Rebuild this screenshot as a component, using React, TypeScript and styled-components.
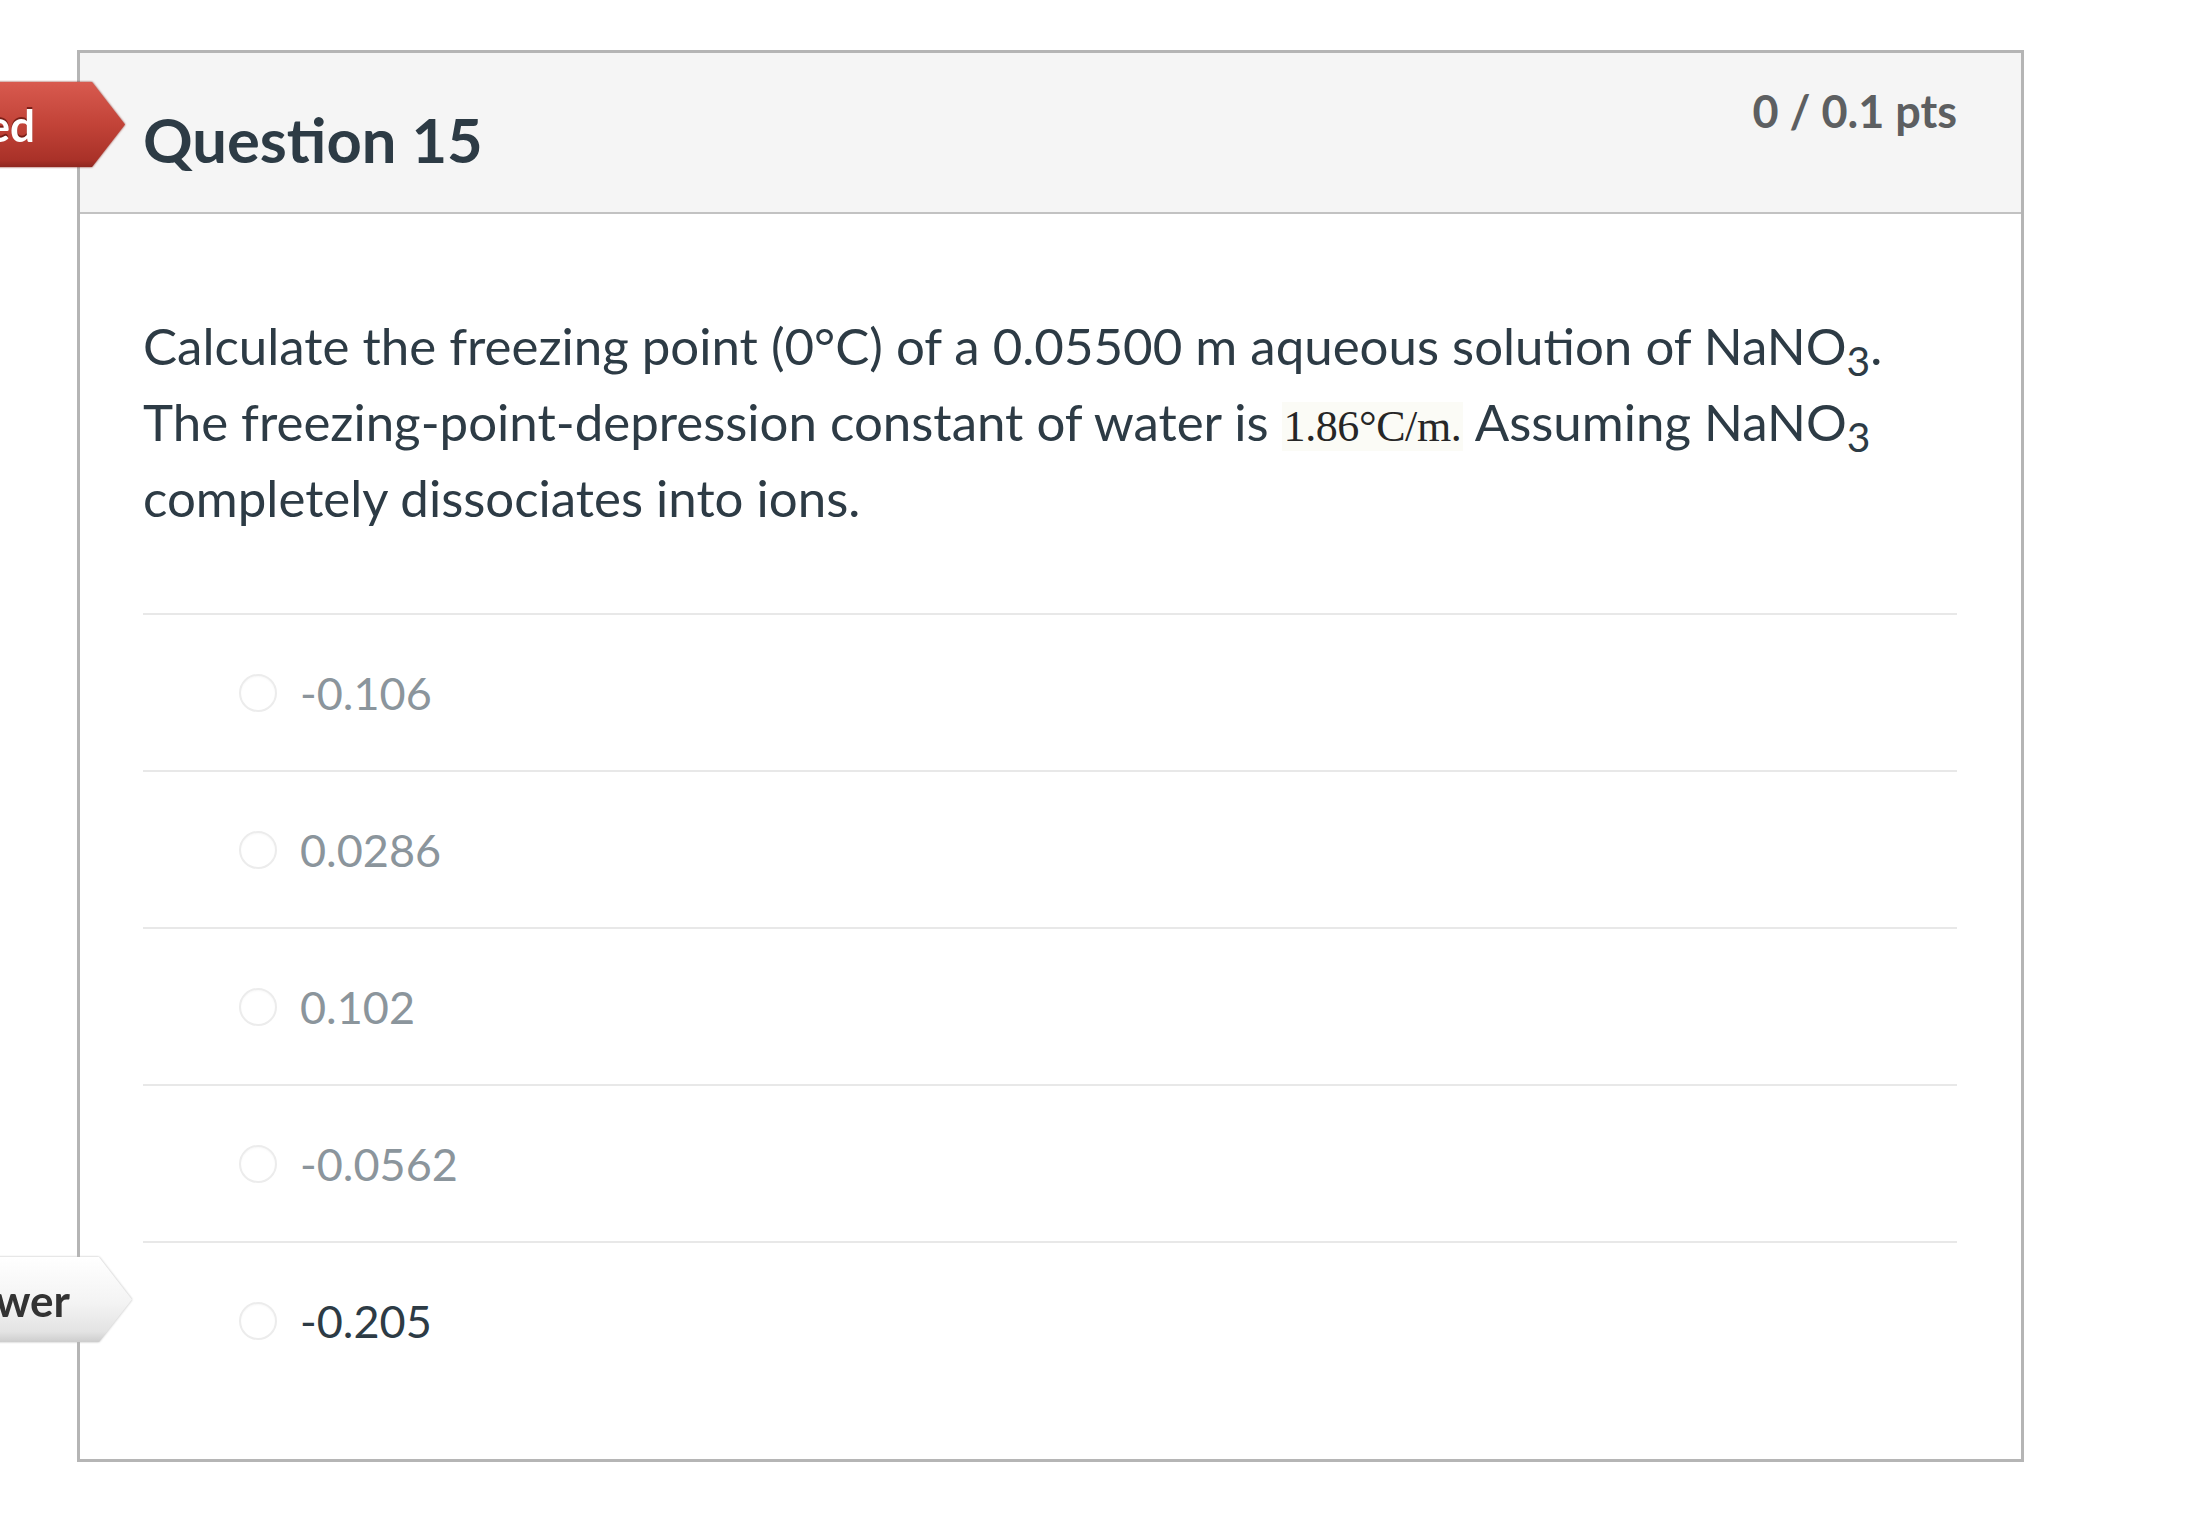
import React from "react";
import styled, { createGlobalStyle } from "styled-components";

const GlobalStyle = createGlobalStyle`
  html, body {
    margin: 0;
    padding: 0;
    background: #ffffff;
  }
  body {
    font-family: Lato, "Open Sans", "Liberation Sans", sans-serif;
    color: #2d3b45;
    overflow: hidden;
  }
`;

const Page = styled.div`
  position: relative;
  overflow: hidden;
  min-height: 1534px;
  padding: 50px 0 0 77px;
  box-sizing: border-box;
`;

const Card = styled.div`
  width: 1947px;
  box-sizing: border-box;
  border: 3px solid #b5b5b5;
  background: #ffffff;
`;

const Header = styled.div`
  height: 161px;
  box-sizing: border-box;
  background: #f5f5f5;
  border-bottom: 2px solid #c2c2c2;
  padding: 0 64px 0 63px;
  display: flex;
  justify-content: space-between;
  align-items: flex-start;
`;

const Title = styled.h2`
  margin: 50px 0 0;
  font-size: 61.5px;
  line-height: 1.2;
  font-weight: 700;
  color: #2d3b45;
`;

const Points = styled.div`
  margin-top: 31px;
  font-size: 45px;
  line-height: 1.2;
  font-weight: 700;
  color: #5d5f61;
`;

const Body = styled.div`
  padding: 94px 64px 61px 63px;
`;

const QuestionText = styled.p`
  margin: 0 0 77px;
  font-size: 51px;
  line-height: 76px;
  color: #2d3b45;

  sub {
    font-size: 0.8em;
    line-height: 0;
    vertical-align: baseline;
    position: relative;
    top: 0.28em;
  }
`;

const Constant = styled.span`
  font-family: "Liberation Serif", "DejaVu Serif", serif;
  font-size: 44px;
  line-height: 0;
  color: #262626;
  background: #fbfbf6;
  letter-spacing: -0.4px;
  padding: 0 2px;
`;

const AnswerList = styled.div`
  display: flex;
  flex-direction: column;
`;

const AnswerRow = styled.label`
  height: 157px;
  box-sizing: border-box;
  border-top: 2px solid #e8e8e8;
  display: flex;
  align-items: center;
  gap: 23px;
  padding-left: 96px;
`;

const Radio = styled.span`
  width: 38px;
  height: 38px;
  box-sizing: border-box;
  border-radius: 50%;
  border: 2px solid #ececec;
  background: #ffffff;
  box-shadow: inset 0 1px 2px rgba(0, 0, 0, 0.03);
  flex-shrink: 0;
`;

const AnswerText = styled.span<{ $correct?: boolean }>`
  font-size: 45px;
  line-height: 1.2;
  color: ${(p) => (p.$correct ? "#2d3b45" : "#8b959c")};
`;

const BadgeWrap = styled.div<{ $top: number; $tip: number; $edge: string }>`
  position: absolute;
  top: ${(p) => p.$top}px;
  right: calc(100% - ${(p) => p.$tip}px);
  filter: drop-shadow(0 0 1px ${(p) => p.$edge});
`;

const Badge = styled.div<{ $tone: "red" | "grey"; $pad: number }>`
  height: 85px;
  box-sizing: border-box;
  padding: 0 ${(p) => p.$pad}px 0 40px;
  display: flex;
  align-items: center;
  white-space: nowrap;
  font-size: 44px;
  font-weight: 700;
  clip-path: polygon(0 0, calc(100% - 33px) 0, 100% 50%, calc(100% - 33px) 100%, 0 100%);
  background: ${(p) =>
    p.$tone === "red"
      ? "linear-gradient(#d85a4f 0%, #c24338 50%, #a93128 92%, #8f2720 100%)"
      : "linear-gradient(#ffffff 0%, #f3f3f3 55%, #e3e3e3 88%, #cdcdcd 100%)"};
  color: ${(p) => (p.$tone === "red" ? "#ffffff" : "#333333")};
  text-shadow: ${(p) =>
    p.$tone === "red" ? "0 -2px 0 rgba(90, 15, 10, 0.7)" : "none"};
`;

const answers = [
  { text: "-0.106", correct: false },
  { text: "0.0286", correct: false },
  { text: "0.102", correct: false },
  { text: "-0.0562", correct: false },
  { text: "-0.205", correct: true },
];

export default function App() {
  return (
    <>
      <GlobalStyle />
      <Page>
        <BadgeWrap $top={82} $tip={125} $edge="#8a2a22">
          <Badge $tone="red" $pad={90}>Unanswered</Badge>
        </BadgeWrap>
        <BadgeWrap $top={1257} $tip={132} $edge="#b8b8b8">
          <Badge $tone="grey" $pad={62}>Correct Answer</Badge>
        </BadgeWrap>

        <Card>
          <Header>
            <Title>Question 15</Title>
            <Points>0 / 0.1 pts</Points>
          </Header>
          <Body>
            <QuestionText>
              Calculate the freezing point (0°C) of a 0.05500 m aqueous solution of NaNO<sub>3</sub>.
              The freezing-point-depression constant of water is <Constant>1.86°C/m.</Constant> Assuming NaNO
              <sub>3</sub> completely dissociates into ions.
            </QuestionText>
            <AnswerList>
              {answers.map((a) => (
                <AnswerRow key={a.text}>
                  <Radio />
                  <AnswerText $correct={a.correct}>{a.text}</AnswerText>
                </AnswerRow>
              ))}
            </AnswerList>
          </Body>
        </Card>
      </Page>
    </>
  );
}
